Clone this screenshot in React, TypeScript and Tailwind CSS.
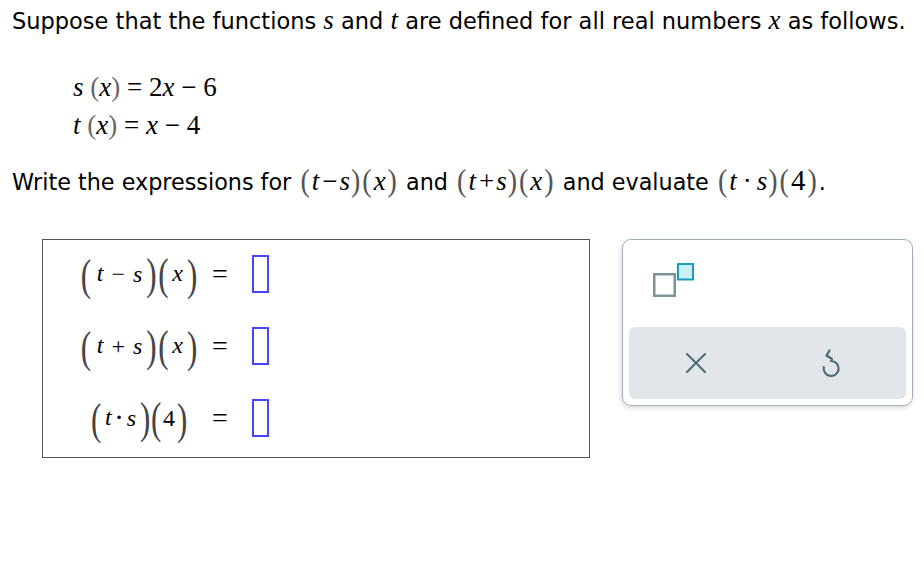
import React from "react";

function I({ children }: { children: React.ReactNode }) {
  return <span className="italic">{children}</span>;
}

function P({ c }: { c: string }) {
  return <span className="text-[#666]">{c}</span>;
}

function MP({ c }: { c: string }) {
  return (
    <span className="inline-block text-[#555] text-[28px] leading-none scale-y-[1.12] font-['Liberation_Serif',serif]">{c}</span>
  );
}

function InlineMath({ children }: { children: React.ReactNode }) {
  return (
    <span className="mx-0.5 text-[27px] leading-none text-black font-['Liberation_Serif',serif]">{children}</span>
  );
}

function Sym({ children }: { children: React.ReactNode }) {
  return <span className="italic text-2xl leading-none font-['Liberation_Serif',serif]">{children}</span>;
}

function Op({ children }: { children: React.ReactNode }) {
  return <span className="mx-2 text-2xl leading-none font-['Liberation_Serif',serif]">{children}</span>;
}

function BigParen({ c }: { c: string }) {
  return (
    <span className="inline-block w-[10px] text-center text-[31px] leading-none text-[#444] scale-y-[1.45] font-['Liberation_Serif',serif]">
      {c}
    </span>
  );
}

function Eq() {
  return (
    <>
      <span className="ml-[15px] text-[28px] leading-none font-['Liberation_Serif',serif]">=</span>
      <span className="inline-block w-[17px] h-[38px] border-2 border-[#4646ff] ml-[24px]" />
    </>
  );
}

export default function App() {
  return (
    <div className="w-[924px] h-[562px] bg-white text-black font-['DejaVu_Sans',sans-serif]">
      <div className="pl-[12px] pt-[7px] text-[22.5px] leading-[28px] whitespace-nowrap">
        Suppose that the functions{" "}
        <span className="text-[27px] leading-none font-['Liberation_Serif',serif]"><I>s</I></span> and{" "}
        <span className="text-[27px] leading-none font-['Liberation_Serif',serif]"><I>t</I></span> are defined for all real numbers{" "}
        <span className="text-[27px] leading-none font-['Liberation_Serif',serif]"><I>x</I></span> as follows.
      </div>

      <div className="pl-[73px] pt-[33px] text-[27px] leading-[38px] whitespace-nowrap font-['Liberation_Serif',serif]">
        <div>
          <I>s</I> <P c="(" /><I>x</I><P c=")" />  =  2<I>x</I> − 6
        </div>
        <div>
          <I>t</I> <P c="(" /><I>x</I><P c=")" /> = <I>x</I> − 4
        </div>
      </div>

      <div className="pl-[12px] pt-[22px] text-[22.3px] leading-[30px] whitespace-nowrap">
        Write the expressions for{" "}
        <InlineMath>
          <MP c="(" />
          <span className="mx-0.5"><I>t</I></span>
          <span className="mx-px">−</span>
          <span className="mx-px"><I>s</I></span>
          <MP c=")" />
          <span className="ml-0.5"><MP c="(" /></span>
          <span className="mx-0.5"><I>x</I></span>
          <MP c=")" />
        </InlineMath>{" "}
        and{" "}
        <InlineMath>
          <MP c="(" />
          <span className="mx-0.5"><I>t</I></span>
          <span className="mx-px">+</span>
          <span className="mx-px"><I>s</I></span>
          <MP c=")" />
          <span className="ml-0.5"><MP c="(" /></span>
          <span className="mx-0.5"><I>x</I></span>
          <MP c=")" />
        </InlineMath>{" "}
        and evaluate{" "}
        <InlineMath>
          <MP c="(" />
          <span className="mx-0.5"><I>t</I></span>
          <span className="mx-1">·</span>
          <span className="mx-px"><I>s</I></span>
          <MP c=")" />
          <span className="ml-0.5"><MP c="(" /></span>
          <span className="mx-0.5 text-[29px]">4</span>
          <MP c=")" />
        </InlineMath>
        .
      </div>

      <div className="flex items-start pl-[42px] pt-[42px]">
        <div className="w-[548px] h-[219px] border border-[#555] flex flex-col">
          <div className="flex items-center h-[68px]">
            <div className="w-[154px] flex justify-end items-center">
              <BigParen c="(" />
              <span className="ml-1.5"><Sym>t</Sym></span>
              <Op>−</Op>
              <Sym>s</Sym>
              <span className="ml-1"><BigParen c=")" /></span>
              <span className="ml-0.5"><BigParen c="(" /></span>
              <span className="ml-1 mr-1"><Sym>x</Sym></span>
              <BigParen c=")" />
            </div>
            <Eq />
          </div>
          <div className="flex items-center h-[76px]">
            <div className="w-[154px] flex justify-end items-center">
              <BigParen c="(" />
              <span className="ml-1.5"><Sym>t</Sym></span>
              <Op>+</Op>
              <Sym>s</Sym>
              <span className="ml-1"><BigParen c=")" /></span>
              <span className="ml-0.5"><BigParen c="(" /></span>
              <span className="ml-1 mr-1"><Sym>x</Sym></span>
              <BigParen c=")" />
            </div>
            <Eq />
          </div>
          <div className="flex items-center h-[68px]">
            <div className="w-[154px] pr-[10px] flex justify-end items-center">
              <BigParen c="(" />
              <span className="ml-1"><Sym>t</Sym></span>
              <span className="mx-1 text-xs leading-none">•</span>
              <Sym>s</Sym>
              <span className="ml-1"><BigParen c=")" /></span>
              <span className="ml-px"><BigParen c="(" /></span>
              <span className="mx-0.5 text-2xl leading-none font-['Liberation_Serif',serif]">4</span>
              <BigParen c=")" />
            </div>
            <Eq />
          </div>
        </div>

        <div className="ml-[32px] w-[291px] h-[167px] rounded-[9px] border border-[#9fb0b6] shadow-[-1px_2px_5px_rgba(0,0,0,0.15)] flex flex-col p-[6px]">
          <div className="h-[81px] relative">
            <svg width="60" height="50" className="absolute left-[17px] top-[17px]" viewBox="0 0 60 50">
              <rect x="8.25" y="11.25" width="20.5" height="21.5" fill="white" stroke="#7c939a" strokeWidth="2.5" />
              <rect x="32" y="1" width="15" height="15.5" fill="#cdeef4" stroke="#14a0bc" strokeWidth="2" />
            </svg>
          </div>
          <div className="flex-1 rounded-[6px] bg-[#dfe5e8] flex items-center">
            <div className="flex-1 flex justify-center">
              <svg width="22" height="22" viewBox="0 0 22 22">
                <path d="M2 2 L20 20 M20 2 L2 20" stroke="#4b6a74" strokeWidth="2" strokeLinecap="round" />
              </svg>
            </div>
            <div className="flex-1 flex justify-center pr-[8px]">
              <svg width="20" height="30" viewBox="822 345 20 30">
                <path d="M830.5 347.5 L827.5 352.5 L833 356" fill="none" stroke="#4b6a74" strokeWidth="2.2" strokeLinecap="round" strokeLinejoin="round" />
                <path d="M832 358 A7.5 7.5 0 1 1 824.8 364" fill="none" stroke="#4b6a74" strokeWidth="2.2" strokeLinecap="round" />
              </svg>
            </div>
          </div>
        </div>
      </div>
    </div>
  );
}
